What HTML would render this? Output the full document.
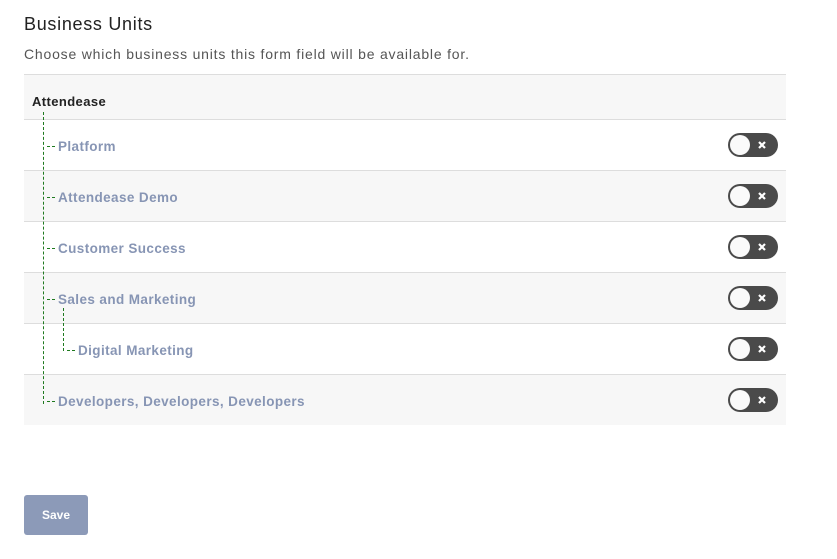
<!DOCTYPE html>
<html><head><style>
body{margin:0;background:#fff;font-family:"Liberation Sans",sans-serif;width:837px;height:559px;position:relative;overflow:hidden}
h2{position:absolute;left:24px;top:14px;margin:0;font-size:18px;font-weight:normal;color:#222;letter-spacing:0.7px}
.sub{position:absolute;left:24px;top:46px;font-size:14px;color:#555;letter-spacing:0.8px}
.tbl{position:absolute;left:24px;top:74px;width:762px;border-top:1px solid #ddd}
.hdr{height:44px;background:#f7f7f7;border-bottom:1px solid #ddd;position:relative}
.hdr span{position:absolute;left:8px;top:19px;font-size:13px;font-weight:bold;color:#222;letter-spacing:0.4px}
.row{height:50px;border-bottom:1px solid #ddd;position:relative}
.row.g{background:#f7f7f7}
.row:last-child{border-bottom:none}
.lbl{position:absolute;top:19px;font-size:13.5px;font-weight:bold;color:#8795b4;letter-spacing:0.4px}
.tg{position:absolute;left:704px;top:13px;width:50px;height:24px;border-radius:12px;background:#4a4a4a}
.tg:before{content:"";position:absolute;left:2px;top:2px;width:20px;height:20px;border-radius:50%;background:#fafafa}
.tg svg{position:absolute;left:30px;top:8px}
.v{position:absolute;border-left:1px dashed #1f7a1f;width:0}
.h{position:absolute;height:1px;width:10px;background:repeating-linear-gradient(90deg,#1f7a1f 0 3px,transparent 3px 5px)}
.btn{position:absolute;left:24px;top:495px;width:64px;height:40px;border-radius:3px;background:#8c9ab8;color:#fff;font-size:12px;font-weight:bold;text-align:center;line-height:40px}
</style></head><body>
<h2>Business Units</h2>
<div class="sub">Choose which business units this form field will be available for.</div>
<div class="tbl">
<div class="hdr"><span>Attendease</span></div>
<div class="row"><span class="lbl" style="left:34px">Platform</span><div class="tg"><svg width="8" height="8"><path d="M1 1L7 7M7 1L1 7" stroke="#fff" stroke-width="2.2"/></svg></div></div>
<div class="row g"><span class="lbl" style="left:34px">Attendease Demo</span><div class="tg"><svg width="8" height="8"><path d="M1 1L7 7M7 1L1 7" stroke="#fff" stroke-width="2.2"/></svg></div></div>
<div class="row"><span class="lbl" style="left:34px">Customer Success</span><div class="tg"><svg width="8" height="8"><path d="M1 1L7 7M7 1L1 7" stroke="#fff" stroke-width="2.2"/></svg></div></div>
<div class="row g"><span class="lbl" style="left:34px">Sales and Marketing</span><div class="tg"><svg width="8" height="8"><path d="M1 1L7 7M7 1L1 7" stroke="#fff" stroke-width="2.2"/></svg></div></div>
<div class="row"><span class="lbl" style="left:54px">Digital Marketing</span><div class="tg"><svg width="8" height="8"><path d="M1 1L7 7M7 1L1 7" stroke="#fff" stroke-width="2.2"/></svg></div></div>
<div class="row g"><span class="lbl" style="left:34px">Developers, Developers, Developers</span><div class="tg"><svg width="8" height="8"><path d="M1 1L7 7M7 1L1 7" stroke="#fff" stroke-width="2.2"/></svg></div></div>
</div>
<div class="v" style="left:43px;top:112px;height:292px"></div>
<div class="h" style="left:47px;top:146px"></div>
<div class="h" style="left:47px;top:197px"></div>
<div class="h" style="left:47px;top:248px"></div>
<div class="h" style="left:47px;top:299px"></div>
<div class="h" style="left:47px;top:401px"></div>
<div class="v" style="left:63px;top:308px;height:43px"></div>
<div class="h" style="left:67px;top:350px"></div>
<div class="btn">Save</div>
</body></html>
